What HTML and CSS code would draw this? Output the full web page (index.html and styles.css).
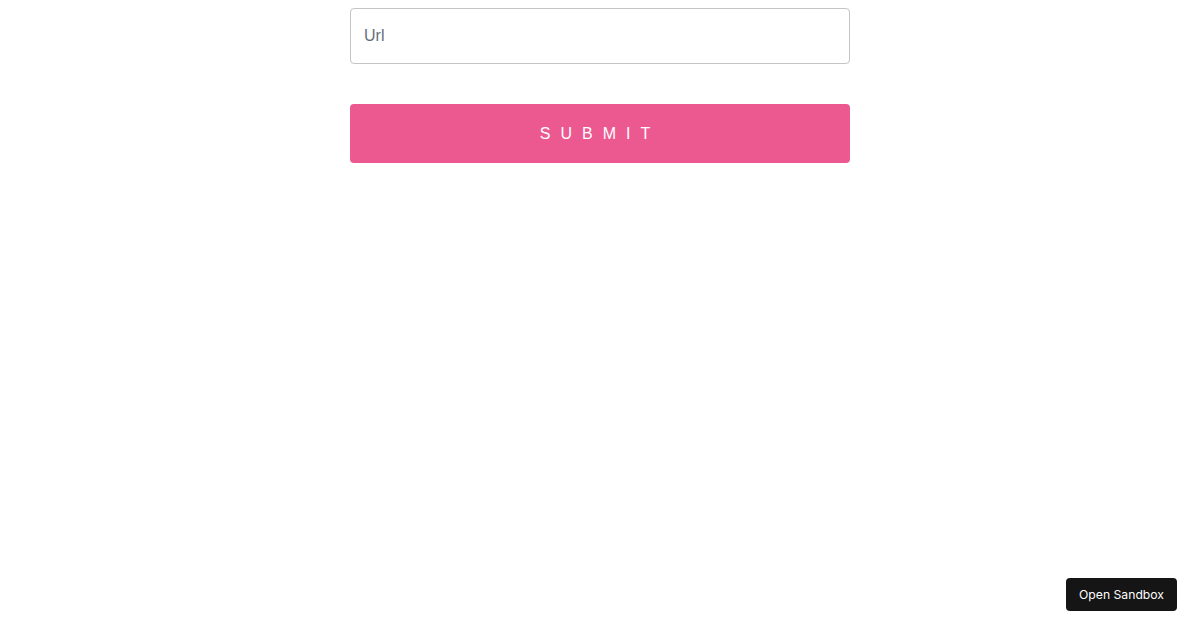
FILE: index.html
```html
<!DOCTYPE html>
<html>
<head>
<meta charset="utf-8">
<link rel="stylesheet" href="styles.css">
</head>
<body>
<form class="form">
  <input class="field" type="text" placeholder="Url">
  <button class="submit" type="button">Submit</button>
</form>
<a class="sandbox">Open Sandbox</a>
</body>
</html>
```
FILE: styles.css
```css
html, body { background: #fff; }
body {
  margin: 8px;
  font-family: "Liberation Sans", Arial, sans-serif;
}
.form {
  width: 500px;
  margin: 0 auto;
  display: flex;
  flex-direction: column;
  gap: 40px;
}
.field {
  box-sizing: border-box;
  width: 100%;
  height: 56px;
  border: 1px solid #c4c4c4;
  border-radius: 4px;
  padding: 0 13px;
  font-family: "Liberation Sans", Arial, sans-serif;
  font-size: 16px;
  color: #333;
  outline: none;
  margin: 0;
}
.field::placeholder { color: #66707a; }
.submit {
  box-sizing: border-box;
  width: 100%;
  height: 59px;
  margin: 0;
  border: none;
  border-radius: 4px;
  background: #ec5990;
  color: #fff;
  text-transform: uppercase;
  font-family: "Liberation Sans", Arial, sans-serif;
  font-size: 16px;
  font-weight: 300;
  letter-spacing: 10px;
  padding: 0;
}
.sandbox {
  position: fixed;
  right: 23px;
  bottom: 19px;
  width: 111px;
  height: 33px;
  box-sizing: border-box;
  display: flex;
  align-items: center;
  justify-content: center;
  background: #151515;
  color: #fff;
  border-radius: 4px;
  font-family: Inter, "Liberation Sans", sans-serif;
  font-size: 12.2px;
}
```
